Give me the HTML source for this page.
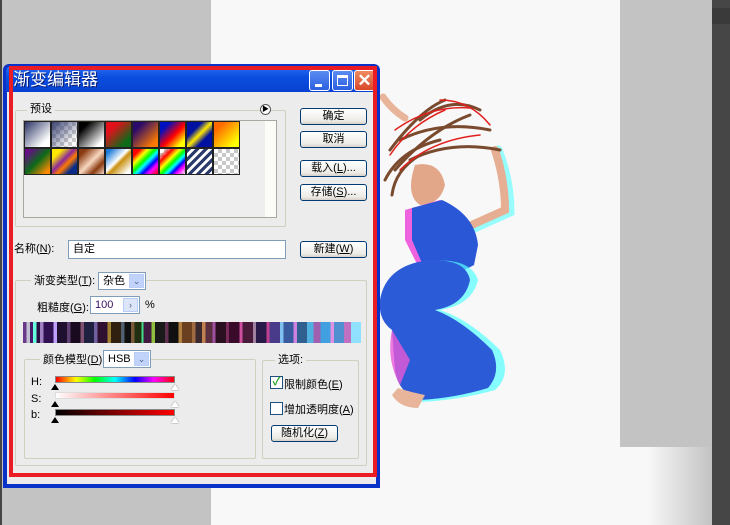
<!DOCTYPE html>
<html><head><meta charset="utf-8"><style>
*{margin:0;padding:0;box-sizing:border-box}
body{width:730px;height:525px;overflow:hidden;position:relative;background:#f8f8f8;font-family:"Liberation Sans","Noto Sans CJK SC",sans-serif;font-size:11px;color:#000}
.a{position:absolute}
.btn{position:absolute;border:1px solid #003c74;border-radius:3px;background:linear-gradient(#fff,#ecebe6 80%,#d6d0c5);text-align:center;font-size:11px;line-height:15px}
.grp{position:absolute;border:1px solid #d0d0bf;border-radius:2px}
.lbl{position:absolute;background:#ececec;padding:0 3px;font-size:11px;line-height:13px;white-space:nowrap}
.sel{position:absolute;background:#fff;border:1px solid #7f9db9;font-size:11px;line-height:16px;padding-left:4px}
.sel i{position:absolute;right:1px;top:1px;bottom:1px;width:15px;background:#c1d3fb;border:1px solid #b9cdf7;font-style:normal;text-align:center;line-height:13px;color:#4d6185;font-size:9px}
.tri{position:absolute;width:0;height:0;border-left:4px solid transparent;border-right:4px solid transparent;border-bottom:6px solid #000}
.trw{border-bottom-color:#fff;filter:drop-shadow(0 0 .6px #555)}
.sw{position:absolute;width:27px;height:27px;border:1px solid #222}
.chk{position:absolute;width:13px;height:13px;border:1px solid #1c5180;background:#fff}
</style></head><body>
<div class="a" style="left:0;top:0;width:2px;height:525px;background:#454545"></div>
<div class="a" style="left:2px;top:0;width:209px;height:525px;background:#c3c3c3"></div>
<div class="a" style="left:620px;top:0;width:92px;height:447px;background:#c3c3c3"></div>
<div class="a" style="left:712px;top:0;width:18px;height:525px;background:#464646"></div>
<div class="a" style="left:712px;top:8px;width:18px;height:16px;background:#3a3a3a"></div>
<div class="a" style="left:620px;top:447px;width:92px;height:78px;background:linear-gradient(90deg,#f8f8f8 30%,#c3c3c3)"></div>

<svg class="a" style="left:375px;top:80px" width="150" height="340" viewBox="375 80 150 340">
<g fill="none" stroke-linecap="round">
<path d="M383 97 Q392 110 405 118" stroke="#e8b49a" stroke-width="7"/>
<path d="M498 150 Q510 180 510 212 L470 230" stroke="#5ff" stroke-width="9" opacity=".6"/>
<path d="M495 150 Q505 180 505 210 L465 228" stroke="#e6ae92" stroke-width="8"/>
<g stroke="#7a4a2e" stroke-width="3">
<path d="M390 150 Q420 110 445 100"/><path d="M395 170 Q430 130 470 115"/><path d="M400 140 Q440 120 490 130"/>
<path d="M385 180 Q400 150 440 140"/><path d="M410 160 Q450 140 500 150"/><path d="M420 120 Q450 95 480 110"/>
<path d="M392 195 Q395 170 420 155"/>
</g>
<g stroke="#e0201c" stroke-width="1.5">
<path d="M390 155 Q410 125 445 110"/><path d="M400 170 Q430 140 480 135"/><path d="M395 130 Q430 105 470 108"/><path d="M440 100 Q470 100 490 125"/>
</g>
</g>
<path d="M415 165 Q440 160 445 185 Q440 205 420 205 Q405 195 415 165Z" fill="#e2a688"/>
<path d="M405 210 L440 200 Q470 215 470 240 L470 265 Q440 280 420 270 L405 240Z" fill="#ee62e0"/>
<path d="M412 208 L442 200 Q475 215 478 245 L474 265 Q448 280 425 270 L412 240Z" fill="#2a57d6"/>
<path d="M420 262 Q470 255 478 280 Q472 305 440 310 Q470 320 500 350 Q512 375 495 390 Q460 400 420 402 Q400 395 398 370 L395 330 Q380 320 380 300 Q385 270 420 262Z" fill="#5ff" opacity=".7"/>
<path d="M418 262 Q465 255 470 280 Q465 305 435 310 Q462 320 492 350 Q502 372 488 388 Q455 398 420 400 Q398 393 395 370 L392 330 Q378 320 380 300 Q385 270 418 262Z" fill="#2c5bd8"/>
<path d="M392 330 Q386 360 400 385 L410 360Z" fill="#e85ad8" opacity=".8"/>
<path d="M392 395 Q400 408 418 408 L425 395 Q410 392 398 388Z" fill="#e8b49a"/>
</svg>

<!-- dialog -->
<div class="a" style="left:3px;top:64px;width:377px;height:424px;background:#0a32c8;border-radius:6px 6px 0 0"></div>
<div class="a" style="left:6px;top:66px;width:371px;height:27px;background:linear-gradient(#2a6cf0,#0b4fe0 40%,#0840d0);border-radius:5px 5px 0 0"></div>
<div class="a" style="left:7px;top:92px;width:369px;height:392px;background:#ececec"></div>
<div class="a" style="left:13px;top:70px;color:#fff;font-size:17px;line-height:20px;text-shadow:1px 1px 0 #0a1c70">渐变编辑器</div>
<div class="a" style="left:309px;top:70px;width:21px;height:21px;border:1px solid #fff;border-radius:3px;background:linear-gradient(#5a8cf2,#2c5fe0)"><div class="a" style="left:5px;top:13px;width:7px;height:3px;background:#fff"></div></div>
<div class="a" style="left:332px;top:70px;width:21px;height:21px;border:1px solid #fff;border-radius:3px;background:linear-gradient(#5a8cf2,#2c5fe0)"><div class="a" style="left:4px;top:4px;width:11px;height:11px;border:1px solid #fff;border-top-width:3px"></div></div>
<div class="a" style="left:354px;top:70px;width:21px;height:21px;border:1px solid #fff;border-radius:3px;background:linear-gradient(#f08a60,#d8482a);color:#fff;font-size:17px;line-height:19px;text-align:center;font-weight:bold">✕</div>

<!-- red frame -->
<div class="a" style="left:9px;top:66px;width:368px;height:411px;border:4px solid #ec1c24"></div>

<!-- presets -->
<div class="grp" style="left:15px;top:110px;width:271px;height:117px"></div>
<div class="lbl" style="left:27px;top:103px">预设</div>
<div class="a" style="left:260px;top:104px;width:11px;height:11px;border:1px solid #555;border-radius:50%;background:#fff;font-size:7px;line-height:9px;text-align:center">▶</div>
<div class="a" style="left:23px;top:120px;width:254px;height:98px;border:1px solid #a8a8a0;background:#eeeeee"></div>
<div class="a" style="left:265px;top:121px;width:11px;height:96px;background:#fbfbf8"></div>
<div class="sw" style="left:24px;top:121px;background:linear-gradient(135deg,#2c3566,#fff 80%)"></div>
<div class="sw" style="left:51px;top:121px;background:linear-gradient(135deg,#3a4272,rgba(255,255,255,0) 80%),repeating-conic-gradient(#ccc 0 25%,#fff 0 50%) 0 0/8px 8px"></div>
<div class="sw" style="left:78px;top:121px;background:linear-gradient(135deg,#000 20%,#fff 85%)"></div>
<div class="sw" style="left:105px;top:121px;background:linear-gradient(135deg,#e3101a 25%,#0c6a18 80%)"></div>
<div class="sw" style="left:132px;top:121px;background:linear-gradient(135deg,#2a0a6a 20%,#ff7a00 85%)"></div>
<div class="sw" style="left:159px;top:121px;background:linear-gradient(135deg,#0010c0 20%,#ff0000 55%,#ffff00 85%)"></div>
<div class="sw" style="left:186px;top:121px;background:linear-gradient(135deg,#0010a0 30%,#ffe800 50%,#0010a0 70%)"></div>
<div class="sw" style="left:213px;top:121px;background:linear-gradient(135deg,#ff6a00 20%,#ffff00 85%)"></div>
<div class="sw" style="left:24px;top:148px;background:linear-gradient(135deg,#6a0a8a 10%,#0c6a18 50%,#ff8a00 90%)"></div>
<div class="sw" style="left:51px;top:148px;background:linear-gradient(135deg,#ffe800 20%,#8a2a9a 45%,#ff7a00 60%,#0a2a8a 80%)"></div>
<div class="sw" style="left:78px;top:148px;background:linear-gradient(135deg,#8a3a10 15%,#f8d8c0 50%,#8a3a10 75%,#f4d4c4)"></div>
<div class="sw" style="left:105px;top:148px;background:linear-gradient(135deg,#1a7ad8 10%,#fff 45%,#c89010 55%,#fff 90%)"></div>
<div class="sw" style="left:132px;top:148px;background:linear-gradient(135deg,#f00 15%,#ff0 30%,#0f0 45%,#0ff 55%,#00f 68%,#f0f 80%,#f00)"></div>
<div class="sw" style="left:159px;top:148px;background:linear-gradient(135deg,rgba(255,0,0,0) 10%,#f00 25%,#ff0 40%,#0f0 52%,#0ff 62%,#00f 72%,#f0f 82%,rgba(255,255,255,0)),repeating-conic-gradient(#ccc 0 25%,#fff 0 50%) 0 0/8px 8px"></div>
<div class="sw" style="left:186px;top:148px;background:repeating-linear-gradient(135deg,#2a3a6a 0 3px,#fff 3px 6px)"></div>
<div class="sw" style="left:213px;top:148px;background:repeating-conic-gradient(#c8c8c8 0 25%,#fff 0 50%) 0 0/8px 8px"></div>

<div class="btn" style="left:300px;top:108px;width:67px;height:17px">确定</div>
<div class="btn" style="left:300px;top:131px;width:67px;height:17px">取消</div>
<div class="btn" style="left:300px;top:160px;width:67px;height:17px">载入(<u>L</u>)...</div>
<div class="btn" style="left:300px;top:184px;width:67px;height:17px">存储(<u>S</u>)...</div>

<div class="a" style="left:14px;top:242px;line-height:14px">名称(<u>N</u>):</div>
<div class="a" style="left:68px;top:240px;width:218px;height:19px;border:1px solid #7f9db9;background:#fff;padding-left:4px;line-height:17px">自定</div>
<div class="btn" style="left:300px;top:241px;width:67px;height:17px">新建(<u>W</u>)</div>

<div class="grp" style="left:15px;top:280px;width:352px;height:186px"></div>
<div class="lbl" style="left:31px;top:275px">渐变类型(<u>T</u>):</div>
<div class="sel" style="left:98px;top:272px;width:48px;height:18px">杂色<i>⌄</i></div>
<div class="a" style="left:37px;top:299px">粗糙度(<u>G</u>):</div>
<div class="sel" style="left:90px;top:296px;width:50px;height:18px;color:#3a1060">100<i style="background:#dde6f8">›</i></div>
<div class="a" style="left:145px;top:299px">%</div>
<div class="a" style="left:23px;top:322px;width:338px;height:21px;background:linear-gradient(90deg,#6a3a8a 0 1%,#c0c0d0 1% 2%,#4a1a6a 2% 3%,#6fd 3% 4%,#2a1040 4% 5%,#a080c0 5% 6%,#301050 6% 9%,#c0a0ff 9% 10%,#201030 10% 13%,#604070 13% 14%,#1a0a20 14% 17%,#805070 17% 18%,#202040 18% 21%,#7060a0 21% 22%,#301030 22% 25%,#a08030 25% 26%,#302010 26% 29%,#506070 29% 30%,#101010 30% 32%,#7a5a3a 32% 33%,#203010 33% 35%,#4d8 35% 35.6%,#401a40 35.6% 38%,#90c040 38% 39%,#1a1a1a 39% 42%,#603050 42% 43%,#101010 43% 46%,#b08040 46% 47%,#6a4020 47% 50%,#a06a40 50% 51%,#3a2a30 51% 53%,#c08050 53% 54%,#5a3040 54% 56%,#a050a0 56% 57%,#2a1020 57% 60%,#7a2a5a 60% 61%,#3a0a2a 61% 64%,#d050a0 64% 65%,#4a1a3a 65% 68%,#a080a0 68% 69%,#2a1a4a 69% 72%,#c04090 72% 73%,#4a3a8a 73% 76%,#80c0f0 76% 77%,#3a5aa0 77% 80%,#d080e0 80% 81%,#306090 81% 84%,#50b0e0 84% 86%,#a060b0 86% 88%,#40a0e0 88% 91%,#e090e0 91% 92%,#5090d0 92% 95%,#c070c0 95% 97%,#90e0ff 97%)"></div>

<div class="grp" style="left:24px;top:359px;width:232px;height:100px"></div>
<div class="lbl" style="left:40px;top:354px">颜色模型(<u>D</u>)</div>
<div class="sel" style="left:103px;top:350px;width:48px;height:18px">HSB<i>⌄</i></div>
<div class="a" style="left:31px;top:376px">H:</div>
<div class="a" style="left:31px;top:393px">S:</div>
<div class="a" style="left:31px;top:409px">b:</div>
<div class="a" style="left:55px;top:376px;width:120px;height:7px;border:1px solid #888;background:linear-gradient(90deg,#f00,#ff0 17%,#0f0 33%,#0ff 50%,#00f 67%,#f0f 83%,#f00)"></div>
<div class="a" style="left:55px;top:392px;width:120px;height:7px;border:1px solid #ddd;background:linear-gradient(90deg,#fff,#f00)"></div>
<div class="a" style="left:55px;top:409px;width:120px;height:7px;border:1px solid #888;background:linear-gradient(90deg,#000,#f00)"></div>
<div class="tri" style="left:51px;top:384px"></div><div class="tri trw" style="left:171px;top:384px"></div>
<div class="tri" style="left:51px;top:401px"></div><div class="tri trw" style="left:171px;top:401px"></div>
<div class="tri" style="left:51px;top:417px"></div><div class="tri trw" style="left:171px;top:417px"></div>

<div class="grp" style="left:262px;top:360px;width:97px;height:99px"></div>
<div class="lbl" style="left:275px;top:354px">选项:</div>
<div class="chk" style="left:270px;top:376px;color:#21a121;font-size:11px;line-height:11px;text-align:center;font-weight:bold">✓</div>
<div class="a" style="left:284px;top:376px">限制颜色(<u>E</u>)</div>
<div class="chk" style="left:270px;top:402px"></div>
<div class="a" style="left:284px;top:401px">增加透明度(<u>A</u>)</div>
<div class="btn" style="left:271px;top:425px;width:67px;height:17px">随机化(<u>Z</u>)</div>
</body></html>
